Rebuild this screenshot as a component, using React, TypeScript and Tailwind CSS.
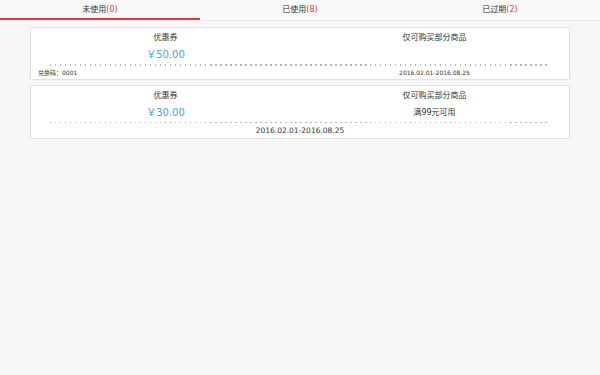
import React from "react";

type Coupon = {
  id: string;
  title: string;
  scope: string;
  amount: string;
  condition?: string;
  code?: string;
  period: string;
};

const tabs = [
  { label: "未使用", count: 0, active: true },
  { label: "已使用", count: 8, active: false },
  { label: "已过期", count: 2, active: false },
];

const coupons: Coupon[] = [
  {
    id: "c1",
    title: "优惠券",
    scope: "仅可购买部分商品",
    amount: "50.00",
    code: "0001",
    period: "2016.02.01-2016.08.25",
  },
  {
    id: "c2",
    title: "优惠券",
    scope: "仅可购买部分商品",
    amount: "30.00",
    condition: "满99元可用",
    period: "2016.02.01-2016.08.25",
  },
];

function Dots() {
  return (
    <div className="mx-[19px] h-[1.5px] bg-[repeating-linear-gradient(to_right,#b5b5b5_0,#b5b5b5_1.5px,transparent_1.5px,transparent_5px)]" />
  );
}

function CouponCard({ coupon }: { coupon: Coupon }) {
  return (
    <div className="border border-[#e2e2e2] bg-white pt-[4px] pb-[1px] text-[#333]">
      <div className="grid grid-cols-2 text-center">
        <div className="flex flex-col items-center">
          <span className="h-[12px] text-[8px] leading-[12px]">{coupon.title}</span>
          <span className="mt-[3px] h-[16px] text-[10px] leading-[16px] text-[#45a7dc]">
            ￥{coupon.amount}
          </span>
        </div>
        <div className="flex flex-col items-center">
          <span className="h-[12px] text-[8px] leading-[12px]">{coupon.scope}</span>
          <span className="mt-[3px] h-[16px] text-[8px] leading-[16px]">
            {coupon.condition ?? ""}
          </span>
        </div>
      </div>
      <div className="mt-[1px]">
        <Dots />
      </div>
      {coupon.code ? (
        <div className="grid grid-cols-2 pt-[2px]">
          <span className="pl-[7px] text-[6px] leading-[10px]">兑换码：{coupon.code}</span>
          <span className="text-center text-[6px] leading-[10px]">{coupon.period}</span>
        </div>
      ) : (
        <div className="pt-[1px] text-center text-[7.5px] leading-[13px]">{coupon.period}</div>
      )}
    </div>
  );
}

export default function App() {
  return (
    <div
      className="min-h-[375px] w-full bg-[#f7f7f7]"
      style={{ fontFamily: '"DejaVu Sans", "Noto Sans CJK SC", sans-serif' }}
    >
      <div className="flex h-[21px] border-b border-[#e8e8e8] bg-[#f9f9f9]">
        {tabs.map((tab) => (
          <div
            key={tab.label}
            className={
              tab.active
                ? "flex flex-1 items-center justify-center border-b-2 border-b-[#e4393c] pt-[2px] text-[8px] text-[#333]"
                : "flex flex-1 items-center justify-center text-[8px] text-[#333]"
            }
          >
            {tab.label}
            <span className="text-[#e4393c]">({tab.count})</span>
          </div>
        ))}
      </div>
      <div className="mx-[30px] mt-[6px] flex flex-col gap-[5px]">
        {coupons.map((coupon) => (
          <CouponCard key={coupon.id} coupon={coupon} />
        ))}
      </div>
    </div>
  );
}
